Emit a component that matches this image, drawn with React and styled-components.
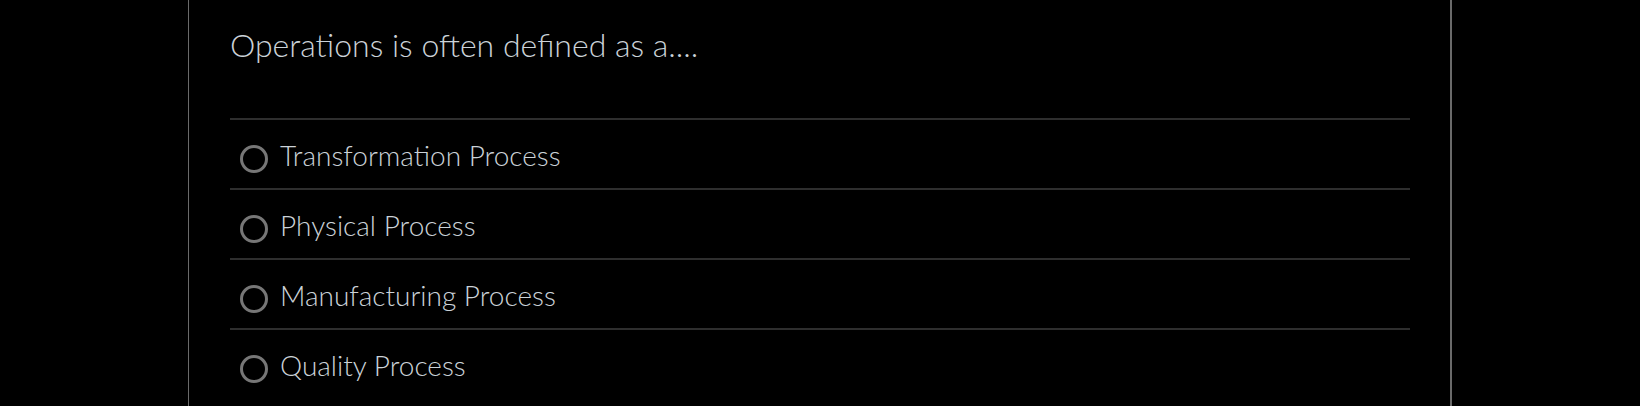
import React from 'react';
import styled, { createGlobalStyle } from 'styled-components';

const GlobalStyle = createGlobalStyle`
    html, body {
        margin: 0;
        padding: 0;
        background: #000000;
        height: 100%;
        overflow: hidden;
    }
`

const Page = styled.div`
    display: flex;
    justify-content: center;
    min-height: 406px;
    background: #000000;
    font-family: Lato, "Open Sans", sans-serif;
`

const Card = styled.div`
    width: 1264px;
    padding: 26px 40px 0 41px;
    border-left: 1px solid #6a6a6a;
    border-right: 2px solid #6a6a6a;
    min-height: 406px;
    box-sizing: border-box;
`

const Question = styled.h2`
    margin: 0 0 54px 0;
    font-size: 32px;
    font-weight: 300;
    line-height: 38px;
    color: #cbd2d8;
`

const Options = styled.div`
    display: flex;
    flex-direction: column;
`

const Option = styled.label`
    display: flex;
    align-items: flex-start;
    gap: 12px;
    height: 70px;
    box-sizing: border-box;
    padding: 18px 0 0 10px;
    border-top: 2px solid #2e2e2e;
    cursor: pointer;
`

const Radio = styled.span`
    flex: none;
    width: 28px;
    height: 28px;
    margin-top: 7px;
    border: 3px solid #777777;
    border-radius: 50%;
    box-sizing: border-box;
`

const OptionText = styled.span`
    font-size: 28px;
    font-weight: 300;
    line-height: 34px;
    color: #cbd2d8;
`

const options = [
    'Transformation Process',
    'Physical Process',
    'Manufacturing Process',
    'Quality Process',
]

function App() {
    return (
        <>
            <GlobalStyle />
            <Page>
                <Card>
                    <Question>Operations is often defined as a....</Question>
                    <Options>
                        {options.map(opt => (
                            <Option key={opt}>
                                <Radio />
                                <OptionText>{opt}</OptionText>
                            </Option>
                        ))}
                    </Options>
                </Card>
            </Page>
        </>
    )
}

export default App;
